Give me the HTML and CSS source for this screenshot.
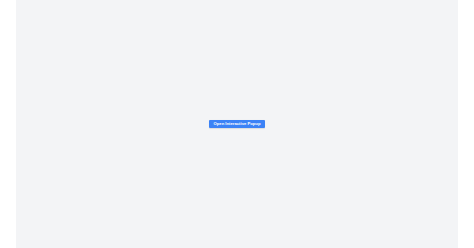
FILE: index.html
```html
<!DOCTYPE html>
<html>
<head>
<meta charset="utf-8">
<link rel="stylesheet" href="styles.css">
</head>
<body>
<main class="stage">
  <button class="open-btn" type="button">Open Interactive Popup</button>
</main>
</body>
</html>
```
FILE: styles.css
```css
html, body {
  margin: 0;
  padding: 0;
  background: #ffffff;
}
body {
  font-family: "Liberation Sans", Arial, sans-serif;
}
.stage {
  margin: 0 16px;
  height: 248px;
  background: #f3f4f6;
  display: flex;
  align-items: center;
  justify-content: center;
}
.open-btn {
  font-family: "Liberation Sans", Arial, sans-serif;
  font-weight: 700;
  font-size: 4.2px;
  line-height: 5px;
  color: #ffffff;
  background: #3b82f6;
  border: none;
  border-radius: 1px;
  padding: 1.5px 4px;
  margin: 0 0 1px 0;
  box-shadow: 0 0.5px 1px rgba(0,0,0,0.1);
}
```
